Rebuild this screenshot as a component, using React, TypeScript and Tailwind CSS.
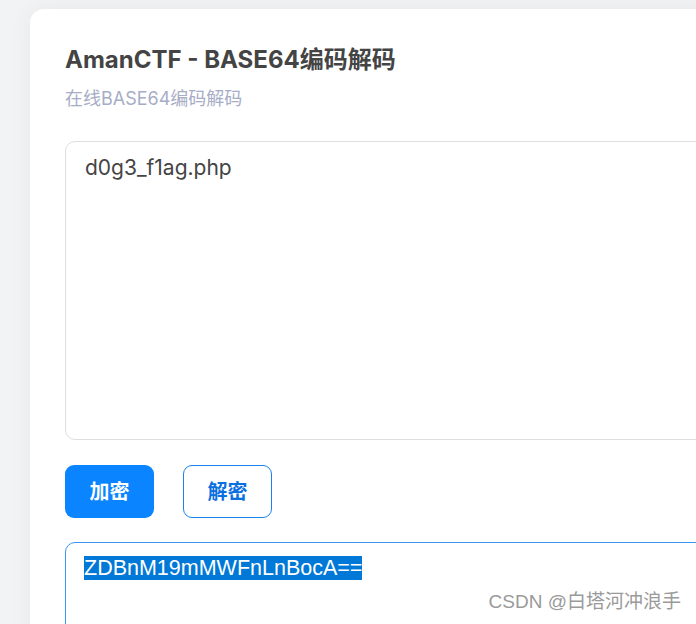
import React from 'react';

const App: React.FC = () => {
    return (
        <div className="relative w-[696px] h-[624px] overflow-hidden bg-[#f2f3f5] font-['Inter','Noto_Sans_CJK_SC',sans-serif]">
            {/* Card */}
            <div className="ml-[30px] mt-[9px] w-[720px] h-[700px] bg-white rounded-[14px] shadow-[0_0_24px_rgba(0,0,0,0.05)] pl-[35px] pt-[36px]">
                <h1 className="text-[24px] font-bold text-[#444] leading-[30px]">
                    AmanCTF - BASE64编码解码
                </h1>
                <p className="mt-[12px] text-[18px] text-[#a7adc6] leading-[24px]">
                    在线BASE64编码解码
                </p>

                {/* Input */}
                <div className="mt-[30px] h-[299px] border border-[#dedede] rounded-[10px] px-[19px] py-[11px]">
                    <span className="text-[21px] text-[#444] leading-[30px]">d0g3_f1ag.php</span>
                </div>

                {/* Buttons */}
                <div className="mt-[25px] flex gap-[29px]">
                    <button className="w-[89px] h-[53px] rounded-[9px] bg-[#0a84ff] text-white text-[20px] font-bold">
                        加密
                    </button>
                    <button className="w-[89px] h-[53px] rounded-[9px] border border-[#1a82f0] bg-white text-[#0a6fe0] text-[20px] font-bold">
                        解密
                    </button>
                </div>

                {/* Output */}
                <div className="mt-[24px] h-[200px] border border-[#3c96f5] rounded-[10px] px-[18px] py-[13px]">
                    <span className="bg-[#0078d7] text-white text-[21.5px] leading-[24px] font-['Liberation_Sans',Arial,sans-serif]">
                        ZDBnM19mMWFnLnBocA==
                    </span>
                </div>
            </div>

            {/* Watermark */}
            <div className="absolute right-[15px] bottom-[8px] text-[19px] text-[#9a9a9a] [text-shadow:0_0_1px_#fff] font-['Liberation_Sans','Noto_Sans_CJK_SC',sans-serif]">
                CSDN @白塔河冲浪手
            </div>
        </div>
    );
};

export default App;
